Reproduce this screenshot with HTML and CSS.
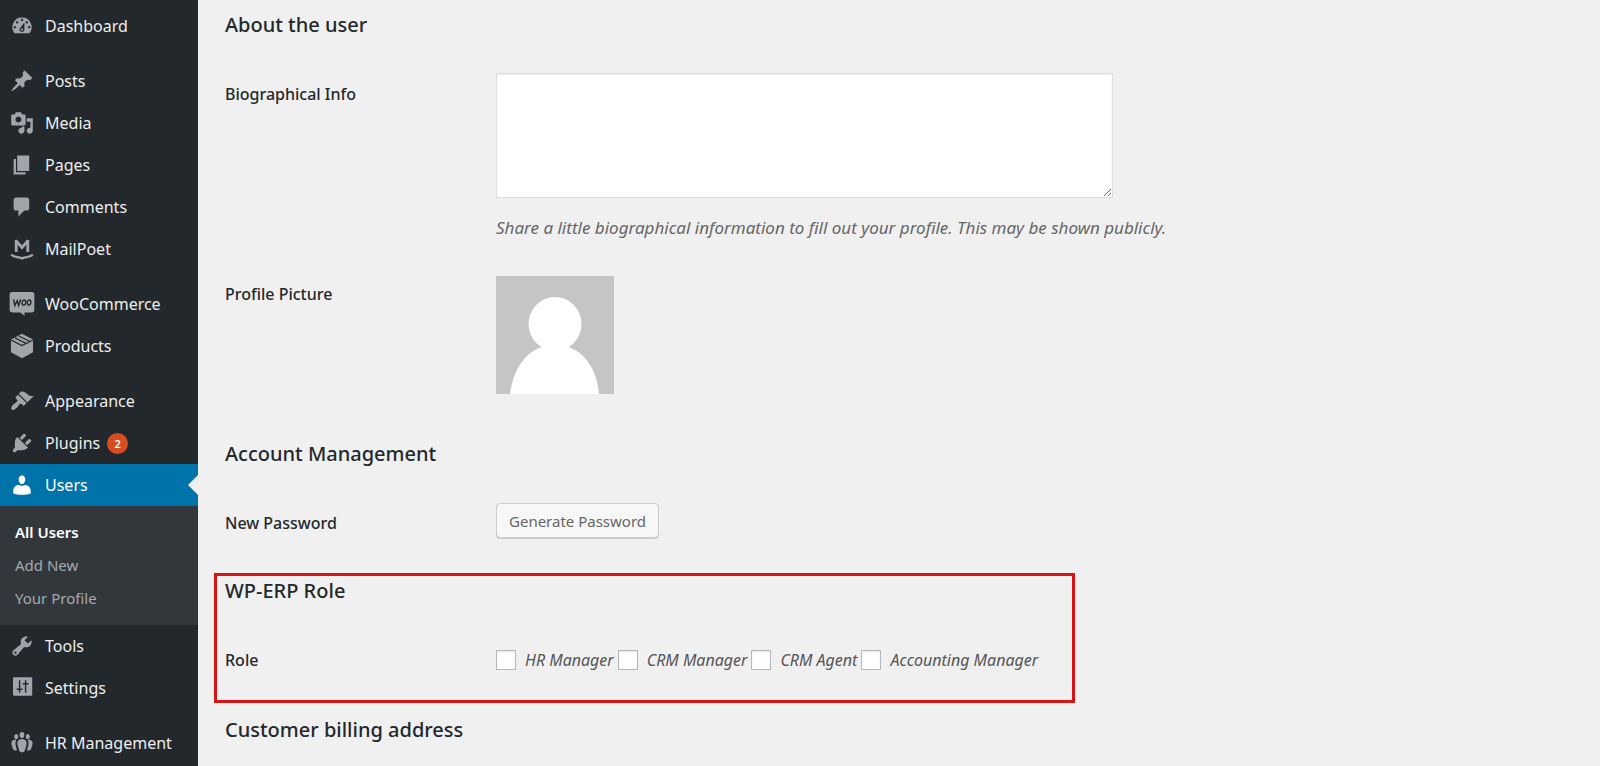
FILE: index.html
```html
<!DOCTYPE html>
<html lang="en">
<head>
<meta charset="utf-8">
<title>Edit User</title>
<link rel="stylesheet" href="styles.css">
</head>
<body>
<div class="layout">
  <nav class="sidebar" aria-label="Main menu">
    <ul class="menu">
      <li><a class="menu-link" href="#"><svg class="icon" viewBox="0 0 20 20"><path fill-rule="evenodd" d="M3.76 16h12.48A7.998 7.998 0 0 0 10 3a7.998 7.998 0 0 0-6.24 13zM10 4c.55 0 1 .45 1 1s-.45 1-1 1-1-.45-1-1 .45-1 1-1zM6 6c.55 0 1 .45 1 1s-.45 1-1 1-1-.45-1-1 .45-1 1-1zm8 0c.55 0 1 .45 1 1s-.45 1-1 1-1-.45-1-1 .45-1 1-1zm-5.37 5.55L12 7v6c0 1.1-.9 2-2 2s-2-.9-2-2c0-.57.24-1.08.63-1.45zM4 10c.55 0 1 .45 1 1s-.45 1-1 1-1-.45-1-1 .45-1 1-1zm12 0c.55 0 1 .45 1 1s-.45 1-1 1-1-.45-1-1 .45-1 1-1zm-5 3c0-.55-.45-1-1-1s-1 .45-1 1 .45 1 1 1 1-.45 1-1z"/></svg>Dashboard</a></li>
      <li class="spaced"><a class="menu-link" href="#"><svg class="icon" viewBox="0 0 20 20"><path d="M10.44 3.02l1.82-1.82 6.36 6.35-1.83 1.82c-1.05-.68-2.48-.57-3.41.36l-.75.75c-.92.93-1.04 2.35-.35 3.41l-1.83 1.82-2.41-2.41-2.8 2.79c-.42.42-3.38 2.71-3.8 2.29s1.86-3.39 2.28-3.81l2.79-2.79L4.1 9.36l1.83-1.82c1.05.69 2.48.57 3.4-.36l.75-.75c.93-.92 1.05-2.35.36-3.41z"/></svg>Posts</a></li>
      <li><a class="menu-link" href="#"><svg class="icon" viewBox="0 0 20 20"><path fill-rule="evenodd" d="M13 11V4c0-.55-.45-1-1-1h-1.67L9 1H5L3.67 3H2c-.55 0-1 .45-1 1v7c0 .55.45 1 1 1h10c.55 0 1-.45 1-1zM7 4.5c1.38 0 2.5 1.12 2.5 2.5S8.38 9.5 7 9.5 4.5 8.38 4.5 7 5.62 4.5 7 4.5zM14 6h5v10.5c0 1.38-1.12 2.5-2.5 2.5S14 17.88 14 16.5s1.12-2.5 2.5-2.5c.17 0 .34.02.5.05V9h-3V6zm-4 8.05V13h2v3.5c0 1.38-1.12 2.5-2.5 2.5S7 17.88 7 16.5 8.12 14 9.5 14c.17 0 .34.02.5.05z"/></svg>Media</a></li>
      <li><a class="menu-link" href="#"><svg class="icon" viewBox="0 0 20 20"><path d="M6 15V2h10v13H6zm-1 1h8v2H3V5h2v11z"/></svg>Pages</a></li>
      <li><a class="menu-link" href="#"><svg class="icon" viewBox="0 0 20 20"><path d="M5 2h9c1.1 0 2 .9 2 2v7c0 1.1-.9 2-2 2h-2l-5 5v-5H5c-1.1 0-2-.9-2-2V4c0-1.1.9-2 2-2z"/></svg>Comments</a></li>
      <li><a class="menu-link" href="#"><svg class="icon line" viewBox="0 0 20 20"><path stroke-width="2.4" d="M5.200 12.500V2.600M14.800 12.500V2.600M4.800 2.800L10 8.800l5.200-6"/><path stroke-width="2" stroke-linecap="round" d="M1.600 15.200c2 1.900 5.400 1.100 8.400 2.600 3-1.500 6.400-.7 8.400-2.600"/></svg>MailPoet</a></li>
      <li class="spaced"><a class="menu-link" href="#"><svg class="icon" viewBox="0 0 20 20"><path d="M1.600 0h16.800c1.100 0 1.900.8 1.900 1.900v13.200c0 1.100-.8 1.900-1.900 1.900H12l.2 2.800L8.500 17H1.600C.5 17-.3 16.200-.3 15.100V1.900C-.3.8.5 0 1.600 0z"/><path class="cut" d="M3 6.200l1 5 2-4 1.200 4L8.900 6"/><ellipse class="cut" cx="11.600" cy="8.800" rx="1.500" ry="2.200" transform="rotate(10 11.600 8.800)"/><ellipse class="cut" cx="15.900" cy="8.800" rx="1.500" ry="2.200" transform="rotate(10 15.900 8.800)"/></svg>WooCommerce</a></li>
      <li><a class="menu-link" href="#"><svg class="icon" viewBox="0 0 20 20"><path d="M10-.2l9.200 4.700v10.700L10 20.200.8 15.200V4.500z"/><path class="cut thin" d="M.8 5L10 9.600 19.200 5M7.300 1.600l9 4.500M4.200 3.200l9 4.500"/></svg>Products</a></li>
      <li class="spaced"><a class="menu-link" href="#"><svg class="icon" viewBox="0 0 20 20"><path d="M14.480 11.060L7.410 3.990l1.500-1.500c.5-.56 2.300-.47 3.510.32 1.210.8 1.430 1.280 2.910 2.100 1.180.64 2.450 1.260 4.450.85zm-.71.71L6.700 4.700 4.930 6.470c-.39.39-.39 1.020 0 1.410l1.060 1.060c.39.39.39 1.030 0 1.420-.6.6-1.430 1.110-2.210 1.690-.35.26-.7.53-1.010.84C1.430 14.230.4 16.080 1.400 17.070c.99 1 2.840-.03 4.180-1.360.31-.31.58-.66.85-1.020.57-.78 1.080-1.610 1.690-2.210.39-.39 1.020-.39 1.410 0l1.060 1.060c.39.39 1.020.39 1.410 0z"/></svg>Appearance</a></li>
      <li><a class="menu-link" href="#"><svg class="icon" viewBox="0 0 20 20"><path d="M13.110 4.360L9.870 7.600 8 5.730l3.240-3.240c.35-.34 1.050-.2 1.560.32.52.51.66 1.210.31 1.550zm-8 1.770l.91-1.120 9.010 9.010-1.190.84c-.71.71-2.630 1.160-3.820 1.160H6.140L4.900 17.260c-.59.59-1.540.59-2.120 0-.59-.58-.59-1.530 0-2.120l1.240-1.240v-3.880c0-1.130.4-3.190 1.090-3.890zm7.260 3.970l3.240-3.240c.34-.35 1.040-.21 1.550.31.52.51.66 1.210.31 1.550l-3.240 3.250z"/></svg>Plugins<span class="count">2</span></a></li>
      <li><a class="menu-link current" href="#" aria-current="page"><svg class="icon" viewBox="0 0 20 20"><path d="M10 9.250c-2.270 0-2.730-3.440-2.730-3.440C7 4.020 7.820 2 9.970 2c2.160 0 2.980 2.020 2.710 3.810 0 0-.41 3.440-2.680 3.440zm0 1.600L12.720 10c2.390 0 4.520 2.330 4.520 4.530v2.490s-3.650 1.130-7.240 1.130c-3.650 0-7.240-1.130-7.240-1.130v-2.490c0-2.250 1.940-4.480 4.470-4.480z"/></svg>Users</a>
        <ul class="submenu">
          <li><a class="submenu-link active" href="#">All Users</a></li>
          <li><a class="submenu-link" href="#">Add New</a></li>
          <li><a class="submenu-link" href="#">Your Profile</a></li>
        </ul>
      </li>
      <li><a class="menu-link" href="#"><svg class="icon" viewBox="0 0 20 20"><path fill-rule="evenodd" d="M16.680 9.770c-1.340 1.340-3.300 1.670-4.950.99l-5.410 6.520c-.99.99-2.590.99-3.580 0s-.99-2.590 0-3.570l6.520-5.420c-.68-1.650-.35-3.610.99-4.950 1.280-1.280 3.120-1.620 4.720-1.060l-2.890 2.890 2.820 2.820 2.860-2.870c.53 1.580.18 3.390-1.080 4.650zM3.810 16.210c.4.39 1.040.39 1.430 0 .4-.4.4-1.040 0-1.430-.39-.4-1.030-.4-1.430 0-.39.39-.39 1.030 0 1.430z"/></svg>Tools</a></li>
      <li><a class="menu-link" href="#"><svg class="icon" viewBox="0 0 20 20"><rect x="2.500" y="1" width="16" height="15.500" rx="1"/><path class="cut" d="M8 3.500v10.500M5.500 11h5M13 3.500v10.500M10.500 6.500h5"/></svg>Settings</a></li>
      <li class="spaced"><a class="menu-link" href="#"><svg class="icon" viewBox="0 0 20 20"><ellipse cx="10" cy="3.400" rx="2" ry="2.500"/><ellipse cx="5.200" cy="4.700" rx="1.700" ry="2.100"/><ellipse cx="14.800" cy="4.700" rx="1.700" ry="2.100"/><path d="M12.200 16.600l1.400-4.600C14.600 9 13 6.600 10 6.600S5.400 9 6.400 12l1.400 4.600c.2.700 1.200 1.200 2.200 1.200s2-.5 2.200-1.200zM5.400 7.300C2.300 7 .7 8.700 1.300 11.200l1.100 3.800c.3.900 1.800 1.400 3.400 1.200L4.800 12c-.5-1.800-.2-3.400.6-4.700zM14.600 7.300c3.100-.3 4.700 1.400 4.100 3.900l-1.100 3.800c-.3.900-1.800 1.400-3.400 1.200l1-4.200c.5-1.800.2-3.400-.6-4.700z"/></svg>HR Management</a></li>
    </ul>
  </nav>

  <main class="content">
    <section class="group about">
      <h2>About the user</h2>
      <div class="field">
        <label class="field-label" for="bio">Biographical Info</label>
        <div class="field-body">
          <textarea id="bio" class="bio"></textarea>
          <p class="description">Share a little biographical information to fill out your profile. This may be shown publicly.</p>
        </div>
      </div>
      <div class="field picture">
        <span class="field-label">Profile Picture</span>
        <svg class="avatar" viewBox="0 0 118 118" role="img" aria-label="Profile picture"><rect width="118" height="118" fill="#c5c5c5"/><ellipse cx="59" cy="48" rx="26.500" ry="27" fill="#fff"/><path d="M14 118C17 94 29 76 46 71h26c17 5 29 23 31 47z" fill="#fff"/></svg>
      </div>
    </section>

    <section class="group account">
      <h2>Account Management</h2>
      <div class="field">
        <span class="field-label">New Password</span>
        <div class="field-body"><button class="button" type="button">Generate Password</button></div>
      </div>
    </section>

    <section class="group highlighted">
      <h2>WP-ERP Role</h2>
      <div class="field" role="group" aria-label="Role">
        <span class="field-label">Role</span>
        <div class="roles">
          <label class="role"><input type="checkbox">HR Manager</label>
          <label class="role"><input type="checkbox">CRM Manager</label>
          <label class="role"><input type="checkbox">CRM Agent</label>
          <label class="role"><input type="checkbox">Accounting Manager</label>
        </div>
      </div>
    </section>

    <section class="group">
      <h2>Customer billing address</h2>
    </section>
  </main>
</div>
</body>
</html>
```
FILE: styles.css
```css
* { box-sizing: border-box; }

body {
  margin: 0;
  background: #f0f0f0;
  color: #23282d;
  font-family: "Noto Sans", "Open Sans", sans-serif;
  font-size: 16px;
}

.layout { display: flex; min-height: 100vh; }

/* Sidebar */
.sidebar {
  flex: 0 0 198px;
  padding-top: 5px;
  background: #23282d;
}

.menu, .submenu { margin: 0; padding: 0; list-style: none; }
.spaced { margin-top: 13px; }

.menu-link {
  position: relative;
  display: flex;
  align-items: center;
  height: 42px;
  padding-left: 10px;
  color: #eee;
  text-decoration: none;
  white-space: nowrap;
}

.icon {
  flex: none;
  width: 24px;
  height: 24px;
  margin-right: 11px;
  overflow: visible;
  fill: #a0a5aa;
}

.icon.line { fill: none; stroke: #a0a5aa; }
.cut { fill: none; stroke: #23282d; stroke-width: 1.2; }
.cut.thin { stroke-width: 1; }

.current { background: #0073aa; color: #fff; }
.current .icon { fill: #fff; }
.current::after {
  content: "";
  position: absolute;
  top: 11px;
  right: 0;
  border: 10px solid transparent;
  border-left: 0;
  border-right-color: #f0f0f0;
}

.count {
  width: 21px;
  height: 21px;
  margin-left: 7px;
  border-radius: 50%;
  background: #d54e21;
  color: #fff;
  font-size: 11px;
  font-weight: 600;
  line-height: 21px;
  text-align: center;
}

.submenu { padding: 10px 0; background: #32373c; }
.submenu-link {
  display: block;
  padding-left: 15px;
  color: #a4a9ae;
  font-size: 15px;
  line-height: 33px;
  text-decoration: none;
}
.submenu-link.active { color: #fff; font-weight: 600; }

/* Profile form */
.content { flex: 1; min-width: 0; padding: 10px 24px 0 27px; }

h2 { margin: 0; font-size: 20px; font-weight: 500; line-height: 30px; }

.field { display: grid; grid-template-columns: 271px 1fr; align-items: start; }
.field-label { padding-top: 9px; font-weight: 500; line-height: 24px; }

.about { padding-bottom: 45px; }
.about .field { margin-top: 33px; }
.about .picture { margin-top: 35px; }
.picture .field-label { padding-top: 6px; }

.bio {
  display: block;
  width: 617px;
  max-width: 100%;
  height: 125px;
  border: 1px solid #ddd;
  background: #fff;
  box-shadow: inset 0 1px 2px rgba(0, 0, 0, .07);
  resize: both;
}

.description {
  margin: 17px 0 0;
  color: #666;
  font-size: 17px;
  font-style: italic;
  line-height: 26px;
}

.avatar { width: 118px; height: 118px; }

.account { padding-bottom: 35px; }
.account .field { margin-top: 34px; }
.account .field-label { padding-top: 8px; }

.button {
  height: 35px;
  padding: 0 12px;
  border: 1px solid #ccc;
  border-radius: 4px;
  background: #f7f7f7;
  box-shadow: 0 1px 0 #ccc;
  color: #666;
  font-family: inherit;
  font-size: 15px;
}

.highlighted {
  width: 861px;
  max-width: 100%;
  margin: 0 0 12px -11px;
  padding: 0 8px 28px;
  border: 3px solid #d81515;
}
.highlighted .field { margin-top: 33px; }

.roles { display: flex; flex-wrap: wrap; gap: 4px; padding-top: 9px; }
.role {
  display: flex;
  align-items: center;
  gap: 9px;
  color: #555;
  font-size: 16px;
  font-style: italic;
  line-height: 24px;
}
.role input {
  width: 20px;
  height: 20px;
  margin: 0;
  appearance: none;
  border: 1px solid #b4b9be;
  background: #fff;
  box-shadow: inset 0 1px 2px rgba(0, 0, 0, .1);
}
```
